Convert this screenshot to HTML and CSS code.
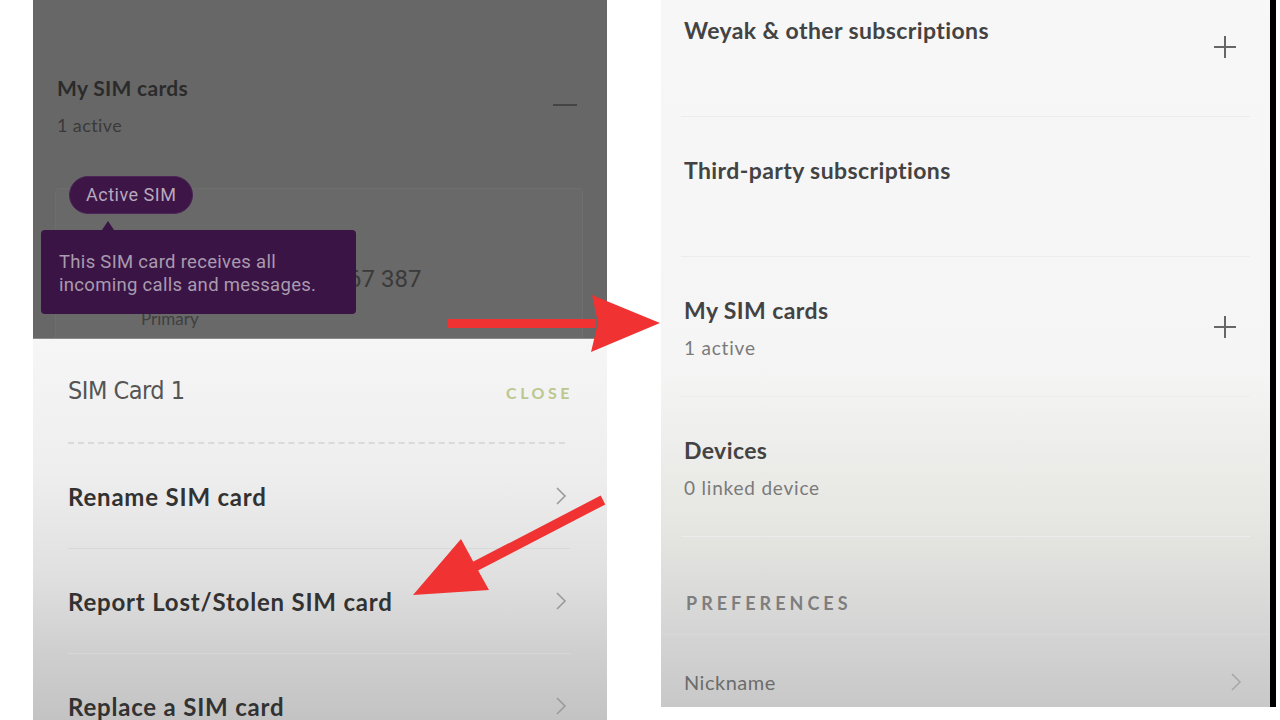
FILE: index.html
```html
<!DOCTYPE html>
<html lang="en">
<head>
<meta charset="utf-8">
<title>SIM cards</title>
<link rel="stylesheet" href="styles.css">
</head>
<body>
<div class="stage">
  <section class="phone-left">
    <div class="acc-head">
      <div>
        <div class="acc-title">My SIM cards</div>
        <div class="acc-sub">1 active</div>
      </div>
      <span class="minus"></span>
    </div>
    <div class="sim-card">
      <span class="badge">Active SIM</span>
      <div class="tooltip">This SIM card receives all<br>incoming calls and messages.</div>
      <div class="sim-info">
        <div class="sim-number">67 387</div>
        <div class="sim-label">Primary</div>
      </div>
    </div>
    <div class="sheet">
      <div class="sheet-head">
        <span class="sheet-title">SIM Card 1</span>
        <span class="sheet-close">CLOSE</span>
      </div>
      <div class="dash"></div>
      <div class="sheet-row"><span>Rename SIM card</span><svg class="chev" viewBox="0 0 12 20"><polyline points="2,2 10,10 2,18"/></svg></div>
      <div class="sheet-row"><span>Report Lost/Stolen SIM card</span><svg class="chev" viewBox="0 0 12 20"><polyline points="2,2 10,10 2,18"/></svg></div>
      <div class="sheet-row"><span>Replace a SIM card</span><svg class="chev" viewBox="0 0 12 20"><polyline points="2,2 10,10 2,18"/></svg></div>
    </div>
  </section>

  <section class="phone-right">
    <div class="list">
      <div class="row">
        <div class="row-text"><div class="row-title">Weyak &amp; other subscriptions</div></div>
        <svg class="plus" viewBox="0 0 24 24"><path d="M12 1v22M1 12h22"/></svg>
      </div>
      <div class="row">
        <div class="row-text"><div class="row-title">Third-party subscriptions</div></div>
      </div>
      <div class="row">
        <div class="row-text"><div class="row-title">My SIM cards</div><div class="row-sub">1 active</div></div>
        <svg class="plus" viewBox="0 0 24 24"><path d="M12 1v22M1 12h22"/></svg>
      </div>
      <div class="row">
        <div class="row-text"><div class="row-title">Devices</div><div class="row-sub">0 linked device</div></div>
      </div>
      <div class="section-label">PREFERENCES</div>
      <div class="pref-row"><span>Nickname</span><svg class="chev small" viewBox="0 0 12 20"><polyline points="2,2 10,10 2,18"/></svg></div>
    </div>
  </section>

  <svg class="arrows" viewBox="0 0 1280 720">
    <rect x="448" y="319" width="148" height="9" fill="#f03232"/>
    <polygon points="592,295 660,323 591,352 598,323" fill="#f03232"/>
    <line x1="603" y1="500" x2="470" y2="569" stroke="#f03232" stroke-width="10"/>
    <polygon points="413,595 461,539 474,563 489,590" fill="#f03232"/>
  </svg>
</div>
</body>
</html>
```

FILE: styles.css
```css
* { box-sizing: border-box; }
html, body { margin: 0; padding: 0; }
body {
  background: #ffffff;
  font-family: Lato, "Open Sans", sans-serif;
}
.stage {
  position: relative;
  width: 1280px;
  height: 720px;
  display: flex;
  align-items: flex-start;
  gap: 54px;
  background: #ffffff;
  overflow: hidden;
}

/* ---------- left phone ---------- */
.phone-left {
  position: relative;
  margin-left: 33px;
  width: 574px;
  height: 720px;
  background: #676767;
  overflow: hidden;
}
.acc-head {
  display: flex;
  justify-content: space-between;
  align-items: center;
  padding: 76px 30px 0 24px;
}
.acc-title {
  font-size: 21px;
  line-height: 24px;
  font-weight: 700;
  color: #2b2b2b;
  letter-spacing: 0.3px;
}
.acc-sub {
  margin-top: 13px;
  font-size: 18px;
  line-height: 24px;
  color: #3a3a3a;
  letter-spacing: 0.4px;
}
.minus {
  display: block;
  width: 24px;
  height: 2px;
  background: #444444;
  margin-top: -4px;
}
.sim-card {
  position: relative;
  margin: 51px 24px 0 22px;
  height: 200px;
  background: #696969;
  border: 1px solid #6e6e6e;
  border-radius: 4px;
}
.badge {
  position: absolute;
  top: -13px;
  left: 13px;
  height: 38px;
  padding: 0 16px;
  border-radius: 19px;
  background: #3d1547;
  border: 1px solid #4c2656;
  color: #b7a9bd;
  font-family: Roboto, sans-serif;
  font-size: 18px;
  letter-spacing: 0.5px;
  line-height: 36px;
}
.tooltip {
  position: absolute;
  left: -15px;
  top: 41px;
  width: 315px;
  height: 84px;
  padding: 21px 6px 0 18px;
  background: #3b1446;
  border-radius: 4px;
  color: #a99bae;
  font-family: Roboto, sans-serif;
  font-size: 18.5px;
  letter-spacing: 0.3px;
  line-height: 23px;
  white-space: nowrap;
  z-index: 2;
}
.tooltip::before {
  content: "";
  position: absolute;
  left: 61px;
  top: -9px;
  border-left: 6px solid transparent;
  border-right: 6px solid transparent;
  border-bottom: 9px solid #3b1446;
}
.sim-info {
  padding: 76px 0 0 85px;
}
.sim-number {
  padding-left: 207px;
  font-family: Roboto, sans-serif;
  font-size: 24px;
  line-height: 28px;
  color: #3a3a3a;
}
.sim-label {
  margin-top: 16px;
  font-size: 17px;
  line-height: 20px;
  color: #3f3f3f;
}

/* bottom sheet */
.sheet {
  position: absolute;
  left: 0;
  right: 0;
  top: 338px;
  bottom: 0;
  border-top: 1px solid #8a8a8a;
  background: linear-gradient(to bottom, #f6f6f6 0%, #eeeeee 35%, #e0e0e0 62%, #cfcfcf 82%, #c3c3c3 100%);
  z-index: 3;
}
.sheet-head {
  height: 103px;
  display: flex;
  align-items: center;
  justify-content: space-between;
  padding: 0 37px 0 35px;
}
.sheet-title {
  font-family: "DejaVu Sans Condensed", "DejaVu Sans", sans-serif;
  font-stretch: condensed;
  font-size: 25px;
  color: #555555;
  letter-spacing: -0.5px;
}
.sheet-close {
  font-size: 16px;
  font-weight: 700;
  letter-spacing: 3.5px;
  color: #bcc78e;
  margin-top: 4px;
  margin-right: -3px;
}
.dash {
  margin: 0 42px 0 35px;
  border-top: 2px dashed #dadada;
}
.sheet-row {
  height: 105px;
  margin: 0 37px 0 35px;
  display: flex;
  align-items: center;
  justify-content: space-between;
  border-bottom: 1px solid #d8d8d8;
  font-size: 24px;
  font-weight: 700;
  color: #323232;
  letter-spacing: 0.8px;
}
.chev {
  width: 12px;
  height: 20px;
  margin-right: 3px;
  fill: none;
  stroke: #9a9a9a;
  stroke-width: 1.6;
}
.chev.small { margin-right: 0; stroke: #a8a8a8; }

/* ---------- right phone ---------- */
.phone-right {
  width: 615px;
  height: 707px;
  border-right: 6px solid #000000;
  background: linear-gradient(to bottom, #f7f7f7 0%, #f5f5f5 52%, #e6e6e2 74%, #d6d6d6 88%, #c8c8c8 100%);
  overflow: hidden;
}
.list { margin-top: -23px; }
.row {
  height: 140px;
  padding: 0 33px 0 23px;
  display: flex;
  justify-content: space-between;
  align-items: center;
  position: relative;
}
.row::after {
  content: "";
  position: absolute;
  left: 20px;
  right: 20px;
  bottom: 0;
  height: 1px;
  background: #ececec;
}
.row-text {
  align-self: flex-start;
  padding-top: 41px;
}
.row-title {
  font-size: 23px;
  line-height: 24px;
  font-weight: 700;
  color: #434343;
  letter-spacing: 0.4px;
}
.row-sub {
  margin-top: 14px;
  font-size: 19px;
  line-height: 24px;
  color: #7a7a7a;
  letter-spacing: 0.8px;
}
.plus {
  width: 24px;
  height: 24px;
  fill: none;
  stroke: #666666;
  stroke-width: 2;
}
.section-label {
  height: 98px;
  padding: 54px 0 0 25px;
  font-size: 18px;
  line-height: 24px;
  font-weight: 700;
  letter-spacing: 4px;
  color: #7e7e7e;
  border-bottom: 1px solid #d8d8d8;
}
.pref-row {
  height: 94px;
  padding: 0 28px 0 23px;
  display: flex;
  align-items: center;
  justify-content: space-between;
  font-size: 20px;
  letter-spacing: 0.5px;
  color: #6c6c6c;
}

/* ---------- arrows overlay ---------- */
.arrows {
  position: absolute;
  left: 0;
  top: 0;
  width: 1280px;
  height: 720px;
  pointer-events: none;
  z-index: 10;
}
```
